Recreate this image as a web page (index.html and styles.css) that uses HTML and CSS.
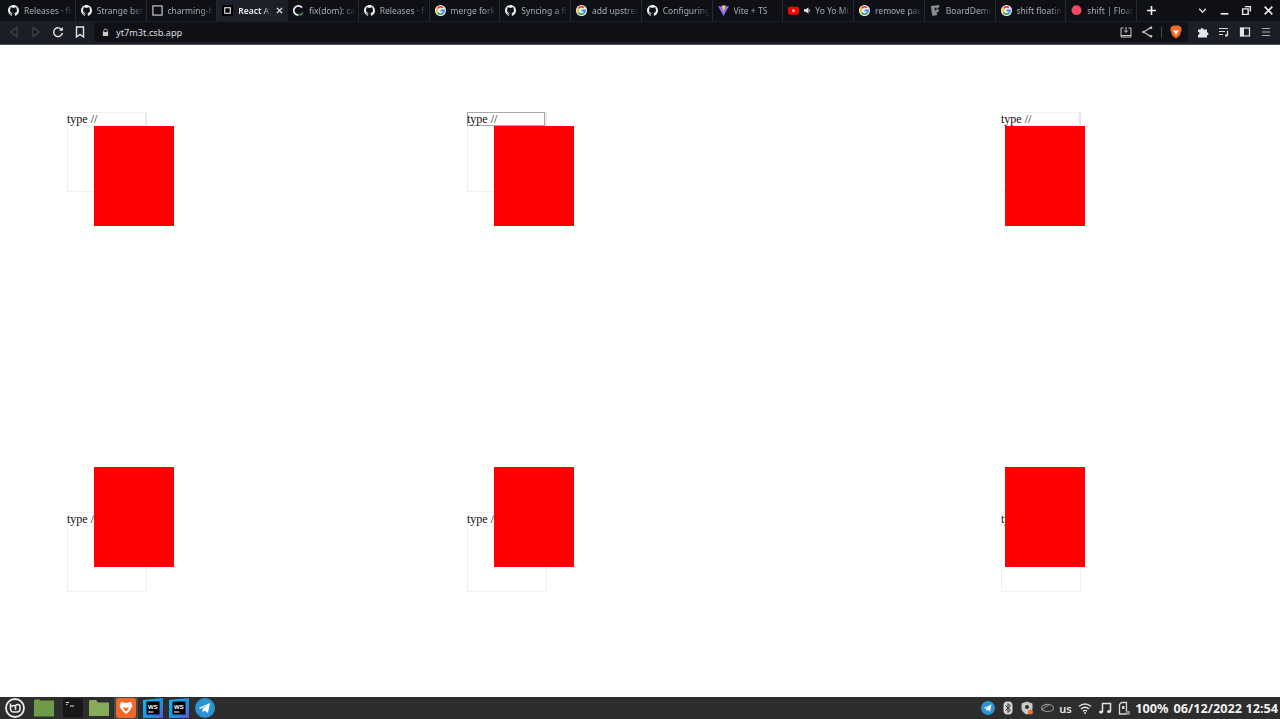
FILE: index.html
```html
<!DOCTYPE html>
<html lang="en">
<head>
<meta charset="utf-8">
<title>React App</title>
<link rel="stylesheet" href="styles.css">
</head>
<body>
<svg class="defs" width="0" height="0" aria-hidden="true">
  <defs>
    <linearGradient id="wsg" x1="0" y1="0" x2="1" y2="1">
      <stop offset="0" stop-color="#17b5e8"/>
      <stop offset="0.6" stop-color="#1f8fe0"/>
      <stop offset="1" stop-color="#6a4fd8"/>
    </linearGradient>
  </defs>
  <symbol id="gh" viewBox="0 0 16 16"><path fill="#eceff1" d="M8 0C3.58 0 0 3.58 0 8c0 3.54 2.29 6.53 5.47 7.59.4.07.55-.17.55-.38 0-.19-.01-.82-.01-1.49-2.01.37-2.53-.49-2.69-.94-.09-.23-.48-.94-.82-1.13-.28-.15-.68-.52-.01-.53.63-.01 1.08.58 1.23.82.72 1.21 1.87.87 2.33.66.07-.52.28-.87.51-1.07-1.78-.2-3.64-.89-3.64-3.95 0-.87.31-1.59.82-2.15-.08-.2-.36-1.02.08-2.12 0 0 .67-.21 2.2.82.64-.18 1.32-.27 2-.27s1.36.09 2 .27c1.53-1.04 2.2-.82 2.2-.82.44 1.1.16 1.92.08 2.12.51.56.82 1.27.82 2.15 0 3.07-1.87 3.75-3.65 3.95.29.25.54.73.54 1.48 0 1.07-.01 1.93-.01 2.2 0 .21.15.46.55.38A8.01 8.01 0 0 0 16 8c0-4.42-3.58-8-8-8z"/></symbol>
  <symbol id="goog" viewBox="0 0 16 16">
    <circle cx="8" cy="8" r="8" fill="#f1f3f4"/>
    <path fill="none" stroke="#ea4335" stroke-width="2.6" d="M3.6 5.2A5.2 5.2 0 0 1 11.6 4.3"/>
    <path fill="none" stroke="#fbbc05" stroke-width="2.6" d="M3.6 5.2a5.2 5.2 0 0 0 0 5.6"/>
    <path fill="none" stroke="#34a853" stroke-width="2.6" d="M3.6 10.8a5.2 5.2 0 0 0 8 .9"/>
    <path fill="none" stroke="#4285f4" stroke-width="2.6" d="M11.6 11.7A5.2 5.2 0 0 0 13.2 8H8"/>
  </symbol>
  <symbol id="ws" viewBox="0 0 20 20">
    <path d="M0 2l20-2v20H0z" fill="url(#wsg)"/>
    <rect x="3.500" y="3.500" width="13" height="13" fill="#000"/>
    <text class="ws" x="5" y="10.500">WS</text>
    <path d="M5 14h5.500" stroke="#fff"/>
  </symbol>
</svg>

<header class="tabstrip">
  <div class="tabs">
    <div class="tab"><svg class="fav"><use href="#gh"/></svg><span class="tab-title">Releases · floating</span></div>
    <div class="tab"><svg class="fav"><use href="#gh"/></svg><span class="tab-title">Strange behaviour</span></div>
    <div class="tab"><svg class="fav" viewBox="0 0 12 12"><rect x="1" y="1" width="10" height="10" fill="none" stroke="#d5d7dc" stroke-width="1.2"/></svg><span class="tab-title">charming-hill</span></div>
    <div class="tab active"><svg class="fav" viewBox="0 0 12 12"><rect width="12" height="12" fill="#000"/><rect x="3" y="3" width="6" height="6" fill="none" stroke="#eee" stroke-width="1.2"/></svg><span class="tab-title">React App</span><svg class="close" viewBox="0 0 8 8"><path d="M1 1l6 6M7 1L1 7" stroke="#e8e8ea" stroke-width="1.5"/></svg></div>
    <div class="tab"><svg class="fav" viewBox="0 0 12 12"><path d="M9.8 3A5 5 0 1 0 6 11" fill="none" stroke="#e6e8ea" stroke-width="2"/><path d="M7 9.500l1.200 1.200L11 8" fill="none" stroke="#3fb950" stroke-width="1.300"/></svg><span class="tab-title">fix(dom): calc</span></div>
    <div class="tab"><svg class="fav"><use href="#gh"/></svg><span class="tab-title">Releases · floating</span></div>
    <div class="tab"><svg class="fav"><use href="#goog"/></svg><span class="tab-title">merge fork with</span></div>
    <div class="tab"><svg class="fav"><use href="#gh"/></svg><span class="tab-title">Syncing a fork</span></div>
    <div class="tab"><svg class="fav"><use href="#goog"/></svg><span class="tab-title">add upstream</span></div>
    <div class="tab"><svg class="fav"><use href="#gh"/></svg><span class="tab-title">Configuring a</span></div>
    <div class="tab"><svg class="fav" viewBox="0 0 12 12"><path d="M0 1l6 1 6-1-6 11z" fill="#8b6cf0"/><path d="M4 .5h4.500L6 7z" fill="#ffd23f"/></svg><span class="tab-title">Vite + TS</span></div>
    <div class="tab"><svg class="fav" viewBox="0 0 12 12"><rect y="2" width="12" height="8.500" rx="2" fill="#f00"/><path d="M5 4.300v4l3-2z" fill="#fff"/></svg><svg class="speaker" viewBox="0 0 8 8"><path d="M0 2.600h2L5 .5v7L2 5.400H0z" fill="#e4e5e8"/><path d="M6 2.500v3" stroke="#e4e5e8"/></svg><span class="tab-title">Yo Yo Music</span></div>
    <div class="tab"><svg class="fav"><use href="#goog"/></svg><span class="tab-title">remove package</span></div>
    <div class="tab"><svg class="fav" viewBox="0 0 12 12"><path d="M1 1l9-1v3H8v2h2L9 8H7l1 3-5 1-1-3z" fill="#8c8f93"/><path d="M5 3h2v3H5z" fill="#1b1d22"/></svg><span class="tab-title">BoardDemo</span></div>
    <div class="tab"><svg class="fav"><use href="#goog"/></svg><span class="tab-title">shift floating</span></div>
    <div class="tab"><svg class="fav" viewBox="0 0 12 12"><circle cx="6" cy="5.600" r="5.400" fill="#ef4b63"/></svg><span class="tab-title">shift | Floating</span></div>
  </div>
  <svg class="newtab" viewBox="0 0 10 10"><path d="M5 0v10M0 5h10" stroke="#f2f2f2" stroke-width="1.800"/></svg>
  <div class="win-controls">
    <svg class="wc" viewBox="0 0 10 10"><path d="M2 3.500l3 3 3-3" fill="none" stroke="#d8d8da" stroke-width="1.300"/></svg>
    <svg class="wc" viewBox="0 0 10 10"><path d="M1.500 8h7" stroke="#e8e8ea" stroke-width="1.600"/></svg>
    <svg class="wc" viewBox="0 0 10 10"><path d="M3.500 1.500h5v4.500M1.500 3.500h5v5h-5z" fill="none" stroke="#e8e8ea" stroke-width="1.300"/></svg>
    <svg class="wc" viewBox="0 0 10 10"><path d="M1.500 1.500l7 7M8.500 1.500l-7 7" stroke="#e8e8ea" stroke-width="1.500"/></svg>
  </div>
</header>

<nav class="toolbar">
  <svg class="nav-ico" viewBox="0 0 12 12"><path d="M9 1.500v9L2.500 6z" fill="none" stroke="#3d404a" stroke-width="1.300"/></svg>
  <svg class="nav-ico" viewBox="0 0 12 12"><path d="M3 1.500v9L9.500 6z" fill="none" stroke="#3d404a" stroke-width="1.300"/></svg>
  <svg class="nav-ico" viewBox="0 0 12 12"><path d="M10 4.200A4.400 4.400 0 1 0 10.400 7" fill="none" stroke="#e2e3e6" stroke-width="1.400"/><path d="M10.800 1v3.800H7z" fill="#e2e3e6"/></svg>
  <svg class="nav-ico" viewBox="0 0 12 12"><path d="M2.500 1h7v10L6 8.400 2.500 11z" fill="none" stroke="#e2e3e6" stroke-width="1.400"/></svg>
  <div class="addressbar">
    <svg class="lock" viewBox="0 0 8 10"><path d="M2 4.500V3a2 2 0 0 1 4 0v1.500" fill="none" stroke="#c9cacd"/><rect x="1" y="4.500" width="6" height="4.500" rx=".6" fill="#c9cacd"/></svg>
    <span class="url">yt7m3t.csb.app</span>
    <div class="addr-actions">
      <svg class="addr-ico" viewBox="0 0 12 12"><path d="M3.500 2H1v7.500h10V2H8.500M1 9.500V11h10V9.500" fill="none" stroke="#c9cacd"/><path d="M6 1v5M4 4.500l2 2 2-2" fill="none" stroke="#c9cacd"/></svg>
      <svg class="addr-ico" viewBox="0 0 12 12"><path d="M10 1.500L2.500 6l7.500 4.500" fill="none" stroke="#c9cacd" stroke-width="1.100"/><circle cx="10" cy="1.700" r="1.300" fill="#c9cacd"/><circle cx="2.500" cy="6" r="1.300" fill="#c9cacd"/><circle cx="10" cy="10.300" r="1.300" fill="#c9cacd"/></svg>
      <span class="addr-sep"></span>
      <svg class="shield" viewBox="0 0 12 14"><path d="M3 .5h6l1 1.200 1.500.3-.3 1.500.5 1.500-2.200 6L6 13.500 2.500 11 .3 5l.5-1.500L.5 2 2 1.700z" fill="#f26a2a"/><path d="M3 5l3 .8L9 5 7 8.500l-1 1.500-1-1.500z" fill="#fff"/></svg>
    </div>
  </div>
  <div class="tool-actions">
    <svg class="tool-ico" viewBox="0 0 12 12"><path d="M1 3.500h2.500a1.500 1.500 0 0 1 3 0H10v2.700a1.500 1.500 0 0 1 0 3V11.500H1V8.800a1.500 1.500 0 0 0 0-3z" fill="#e4e5e8"/></svg>
    <svg class="tool-ico" viewBox="0 0 12 12"><path d="M1 2.500h9M1 5.500h6M1 8.500h4" stroke="#d8d9dc" stroke-width="1.100"/><path d="M9.500 5v4.500" stroke="#d8d9dc" stroke-width="1.300"/><circle cx="8.300" cy="9.500" r="1.300" fill="#d8d9dc"/></svg>
    <svg class="tool-ico" viewBox="0 0 12 12"><rect x="1.500" y="2" width="9" height="8" fill="none" stroke="#e4e5e8" stroke-width="1.200"/><rect x="1.500" y="2" width="3.500" height="8" fill="#e4e5e8"/></svg>
    <svg class="tool-ico" viewBox="0 0 12 12"><path d="M2 2.500h8M2 6h8M2 9.500h8" stroke="#a9abb0" stroke-width="1.100"/></svg>
  </div>
</nav>

<main class="stage">
  <section class="demo"><div class="field">type //</div><div class="float"></div></section>
  <section class="demo"><div class="field focus">type //</div><div class="float"></div></section>
  <section class="demo"><div class="field">type //</div><div class="float near"></div></section>
  <section class="demo"><div class="field">type //</div><div class="float up"></div></section>
  <section class="demo"><div class="field">type //</div><div class="float up"></div></section>
  <section class="demo"><div class="field">type //</div><div class="float up near"></div></section>
</main>

<footer class="taskbar">
  <div class="launchers">
    <svg class="app logo" viewBox="0 0 20 20"><circle cx="10" cy="10" r="9" fill="none" stroke="#ececec" stroke-width="1.800"/><path d="M5.500 5.500V11a3 3 0 0 0 3 3h3.500a3 3 0 0 0 3-3V9a2.200 2.200 0 0 0-4.500-.4A2.200 2.200 0 0 0 6.500 9M10.500 8.500V12" fill="none" stroke="#ececec" stroke-width="1.500"/></svg>
    <svg class="app folder" viewBox="0 0 20 20"><path d="M1 1.500h5v1h14v16H0V2.500z" fill="#6f9a49"/></svg>
    <svg class="app" viewBox="0 0 20 20"><rect width="20" height="19" y=".5" rx="2" fill="#17171a"/><path d="M3 4.500h3M3 6.500h1.500M7 8h4" stroke="#ddd"/></svg>
    <svg class="app" viewBox="0 0 20 20"><path d="M0 3.500a1.500 1.500 0 0 1 1.500-1.500H7l2 2.500h11V18H0z" fill="#86ab5b"/></svg>
    <span class="app-active"><svg class="app" viewBox="0 0 20 20"><rect width="20" height="20" rx="3" fill="#f2682a"/><path d="M5 4l5 1 5-1 1.500 4-3 5-3.500 3-3.500-3-3-5z" fill="#fff"/><path d="M7 9l3 1 3-1-2 4H9z" fill="#f2682a"/></svg></span>
    <svg class="app"><use href="#ws"/></svg>
    <svg class="app"><use href="#ws"/></svg>
    <svg class="app" viewBox="0 0 20 20"><circle cx="10" cy="10" r="10" fill="#2a93d3"/><path d="M3.500 10L15 5l-2 10-3.500-2.500-1.800 1.800-.2-3.300L13 6.500 6 10.800z" fill="#fff"/></svg>
  </div>
  <div class="tray">
    <svg class="tray-ico" viewBox="0 0 14 14"><circle cx="7" cy="7" r="7" fill="#2a93d3"/><path d="M2.500 7L10.500 3.500 9 10.500 6.500 8.800 5.300 10l-.2-2.300L9 4.500 4 7.500z" fill="#fff"/></svg>
    <svg class="tray-ico" viewBox="0 0 14 14"><rect x="2.500" y="0.500" width="9" height="13" rx="4" fill="#d7d7d7"/><path d="M4.500 4.500l5 4.500L7 11.500v-9l2.500 2.500-5 4.500" fill="none" stroke="#2d2d2d"/></svg>
    <svg class="tray-ico" viewBox="0 0 14 14"><path d="M7 .5l5.500 2v4.500c0 3-2.500 5.500-5.500 6.500C4 12.500 1.500 10 1.500 7V2.500z" fill="#c9c9c9"/><circle cx="7" cy="6" r="2" fill="#2d2d2d"/><circle cx="10.500" cy="11" r="2.500" fill="#e8702a"/></svg>
    <svg class="tray-ico" viewBox="0 0 14 14"><ellipse cx="7.500" cy="7" rx="6" ry="3.600" fill="none" stroke="#8d8d8d" stroke-width="1.200"/><path d="M1 9l8-5" stroke="#8d8d8d"/></svg>
    <span class="kbd">us</span>
    <svg class="tray-ico" viewBox="0 0 14 14"><path d="M1 5.500a8.500 8.500 0 0 1 12 0M3 8a5.500 5.500 0 0 1 8 0M5 10.200a2.800 2.800 0 0 1 4 0" fill="none" stroke="#dcdcdc" stroke-width="1.300"/><circle cx="7" cy="12" r="1" fill="#dcdcdc"/></svg>
    <svg class="tray-ico" viewBox="0 0 14 14"><path d="M4.500 11V2.500h8V10.500" fill="none" stroke="#e2e2e2" stroke-width="1.500"/><ellipse cx="3" cy="11" rx="2" ry="1.600" fill="#e2e2e2"/><ellipse cx="11" cy="10.500" rx="2" ry="1.600" fill="#e2e2e2"/></svg>
    <svg class="tray-ico last" viewBox="0 0 14 14"><path d="M2.500 13V3.500l2-2h5v11.500z" fill="none" stroke="#d8d8d8" stroke-width="1.300"/><path d="M5 5h2.500v3H5z" fill="#d8d8d8"/><path d="M9 10h4v3.500H9z" fill="#8f8f8f"/></svg>
    <span class="battery">100%</span>
    <time class="clock">06/12/2022 12:54</time>
  </div>
</footer>
</body>
</html>
```

FILE: styles.css
```css
* {
  box-sizing: border-box;
}

html,
body {
  margin: 0;
  height: 719px;
  overflow: hidden;
}

body {
  display: flex;
  flex-direction: column;
  background: #fff;
  font-family: "Noto Sans", sans-serif;
}

.defs {
  position: absolute;
}

/* Tab strip */
.tabstrip {
  flex: 0 0 21px;
  display: flex;
  align-items: stretch;
  padding-left: 5px;
  background: #0e1016;
}

.tabs {
  display: flex;
  width: 1132px;
}

.tab {
  flex: 0 0 70.750px;
  min-width: 0;
  display: flex;
  align-items: center;
  gap: 5px;
  padding: 0 2px 0 5px;
  border-right: 1px solid #262932;
  color: #a9abb2;
  font-size: 8.500px;
}

.tab:first-child {
  flex-basis: 72.750px;
  margin-left: -2px;
}

.tab.active {
  background: #1e2029;
  border-right-color: #1e2029;
  padding-right: 4px;
  color: #e9eaec;
  font-weight: 600;
}

.tab-title {
  flex: 1 1 0;
  min-width: 0;
  overflow: hidden;
  white-space: nowrap;
  -webkit-mask-image: linear-gradient(to right, #000 72%, transparent 100%);
  mask-image: linear-gradient(to right, #000 72%, transparent 100%);
}

.fav {
  flex: 0 0 11px;
  width: 11px;
  height: 11px;
}

.speaker {
  flex: 0 0 7px;
  width: 7px;
  height: 7px;
  margin-right: -1px;
}

.close {
  flex: 0 0 7px;
  width: 7px;
  height: 7px;
}

.newtab {
  flex: 0 0 9px;
  width: 9px;
  height: 9px;
  align-self: center;
  margin-left: 10px;
}

.win-controls {
  margin-left: auto;
  display: flex;
  align-items: center;
  gap: 11px;
  padding-right: 6px;
}

.wc {
  width: 11px;
  height: 11px;
}

/* Toolbar */
.toolbar {
  flex: 0 0 24px;
  display: flex;
  align-items: center;
  padding: 0 0 1px 3px;
  background: #1c1e27;
  border-bottom: 1px solid #50525a;
}

.nav-ico {
  flex: 0 0 22px;
  width: 12px;
  height: 12px;
}

.addressbar {
  flex: 0 0 1094px;
  height: 20px;
  margin-left: 3px;
  display: flex;
  align-items: center;
  padding: 0 5px 0 8px;
  background: #0f1117;
  border-radius: 3px;
}

.lock {
  width: 7px;
  height: 9px;
}

.url {
  margin-left: 7px;
  color: #dcdde0;
  font-size: 9.200px;
}

.addr-actions {
  margin-left: auto;
  display: flex;
  align-items: center;
}

.addr-ico {
  width: 12px;
  height: 12px;
  margin-right: 9px;
}

.addr-sep {
  width: 1px;
  height: 11px;
  margin: 0 8px 0 -1px;
  background: #44464e;
}

.shield {
  width: 12px;
  height: 14px;
  margin-right: 1px;
}

.tool-actions {
  display: flex;
  align-items: center;
  gap: 9px;
  margin-left: 9px;
}

.tool-ico {
  width: 12px;
  height: 12px;
}

/* Page content */
.stage {
  flex: 1 1 0;
  display: grid;
  grid-template-columns: 400px 534px 80px;
  grid-template-rows: 80px 80px;
  row-gap: 320px;
  align-content: start;
  padding: 67px 0 0 67px;
  background: #fff;
}

.demo {
  position: relative;
  width: 80px;
  height: 80px;
  box-shadow: inset 0 0 0 1px #f1f1f1;
}

.demo::after {
  content: "";
  position: absolute;
  top: 0;
  right: 0;
  width: 2px;
  height: 14px;
  background: #e8e8e8;
}

.field {
  height: 14px;
  color: #111;
  font-family: "Liberation Serif", serif;
  font-size: 12px;
  line-height: 14px;
  box-shadow: inset 0 -1px 0 #f4f4f4;
}

.field.focus {
  width: 78px;
  box-shadow: inset 0 0 0 1px #a8a8a8;
}

.float {
  position: absolute;
  z-index: 1;
  top: 14px;
  left: 27px;
  width: 80px;
  height: 100px;
  background: #f00;
}

.float.near {
  left: 4px;
}

.float.up {
  top: -45px;
}

/* Taskbar */
.taskbar {
  flex: 0 0 22px;
  display: flex;
  align-items: center;
  justify-content: space-between;
  background: #2d2d2d;
}

.launchers {
  display: flex;
  align-items: center;
  gap: 6px;
  padding-left: 5px;
}

.app {
  flex: 0 0 20px;
  width: 20px;
  height: 20px;
}

.logo,
.folder {
  margin-right: 3px;
}

.app-active {
  display: flex;
  align-items: center;
  justify-content: center;
  width: 24px;
  height: 22px;
  margin: 0 -1px;
  background: #4a4a4a;
}

.ws {
  fill: #fff;
  font-family: "Liberation Sans", sans-serif;
  font-size: 6px;
  font-weight: 700;
}

.tray {
  display: flex;
  align-items: center;
  padding-right: 2px;
}

.tray-ico {
  width: 14px;
  height: 14px;
  margin-right: 5.500px;
}

.tray-ico.last {
  margin-right: 4px;
}

.kbd {
  margin-right: 6.500px;
  color: #e4e4e4;
  font-size: 11px;
  font-weight: 600;
}

.battery {
  margin-right: 5px;
  color: #f0f0f0;
  font-size: 12.700px;
  font-weight: 700;
}

.clock {
  color: #f0f0f0;
  font-size: 12.700px;
  font-weight: 700;
  white-space: nowrap;
}
```
